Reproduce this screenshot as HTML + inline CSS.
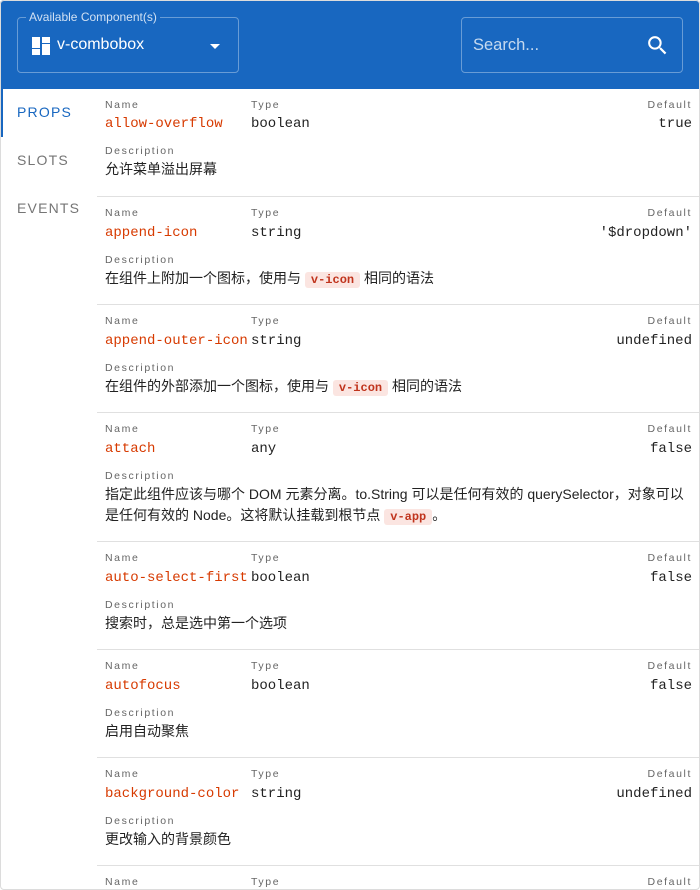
<!DOCTYPE html><html><head><meta charset="utf-8"><style>
*{box-sizing:border-box;margin:0;padding:0}
body{width:700px;height:890px;overflow:hidden;background:#fff;font-family:"Liberation Sans","Noto Sans CJK SC",sans-serif;position:relative}
.card{position:absolute;left:0;top:0;width:700px;height:890px;border-radius:4px;overflow:hidden}
.bord{position:absolute;left:0;top:0;width:700px;height:890px;border:1px solid #dcdcdc;border-radius:4px;pointer-events:none}
.hdr{position:absolute;left:0;top:0;width:700px;height:89px;background:#1867c0}
.sel{position:absolute;left:17px;top:17px;width:222px;height:56px;border:1px solid rgba(255,255,255,.35);border-radius:4px}
.leg{position:absolute;left:26px;top:10px;font-size:12px;color:rgba(255,255,255,.8);background:#1867c0;padding:0 3px;line-height:14px}
.srch{position:absolute;left:461px;top:17px;width:222px;height:56px;border:1px solid rgba(255,255,255,.35);border-radius:4px}
.tab{position:absolute;left:17px;font-size:14px;letter-spacing:1.2px;color:#757575}
.row{position:absolute;left:97px;width:603px;height:108px;border-top:1px solid #e0e0e0}
.lbl{position:absolute;font-size:10.5px;letter-spacing:1.6px;color:#666;line-height:12px}
.val{position:absolute;font-family:"Liberation Mono",monospace;font-size:14px;color:#222;line-height:18px}
.nm{color:#d73a00}
.d{position:absolute;left:8px;right:16px;font-size:14px;color:#222;line-height:21px}
code{font-family:"Liberation Mono",monospace;font-size:12px;font-weight:bold;color:#c0341d;background:#fbe5e1;border-radius:3px;padding:1px 6px}
</style></head><body><div class="card">
<div class="hdr">
<div class="sel"><div style="position:absolute;left:14px;top:19px;width:8px;height:11px;background:#fff"></div><div style="position:absolute;left:14px;top:31px;width:8px;height:6px;background:#fff"></div><div style="position:absolute;left:24px;top:19px;width:8px;height:6px;background:#fff"></div><div style="position:absolute;left:24px;top:26px;width:8px;height:11px;background:#fff"></div>
<div style="position:absolute;left:39px;top:18px;font-size:16px;color:#fff">v-combobox</div>
<div style="position:absolute;left:192px;top:26px;width:0;height:0;border-left:5px solid transparent;border-right:5px solid transparent;border-top:5px solid #fff"></div></div>
<div class="leg" style="left:26px">Available Component(s)</div>
<div class="srch"><div style="position:absolute;left:11px;top:18px;font-size:16.5px;color:rgba(255,255,255,.75)">Search...</div>
<svg style="position:absolute;left:183px;top:15px" width="25" height="25" viewBox="0 0 24 24"><path fill="#fff" d="M15.5 14h-.79l-.28-.27A6.47 6.47 0 0 0 16 9.5 6.5 6.5 0 1 0 9.5 16c1.61 0 3.09-.59 4.23-1.57l.27.28v.79l5 4.99L20.49 19l-4.99-5zm-6 0C7.01 14 5 11.99 5 9.5S7.01 5 9.5 5 14 7.01 14 9.5 11.99 14 9.5 14z"/></svg></div>
</div>
<div style="position:absolute;left:1px;top:89px;width:2px;height:48px;background:#1867c0"></div>
<div class="tab" style="top:104px;color:#1867c0">PROPS</div>
<div class="tab" style="top:152px">SLOTS</div>
<div class="tab" style="top:200px">EVENTS</div>
<div class="row" style="top:88px;border-top:none"><div class="lbl" style="left:8px;top:11px">Name</div><div class="lbl" style="left:154px;top:11px">Type</div><div class="lbl" style="right:8px;top:11px">Default</div><div class="val nm" style="left:8px;top:27px">allow-overflow</div><div class="val" style="left:154px;top:27px">boolean</div><div class="val" style="right:8px;top:27px">true</div><div class="lbl" style="left:8px;top:57px">Description</div><div class="d" style="top:71px">允许菜单溢出屏幕</div></div>
<div class="row" style="top:196px"><div class="lbl" style="left:8px;top:10px">Name</div><div class="lbl" style="left:154px;top:10px">Type</div><div class="lbl" style="right:8px;top:10px">Default</div><div class="val nm" style="left:8px;top:27px">append-icon</div><div class="val" style="left:154px;top:27px">string</div><div class="val" style="right:8px;top:27px">'$dropdown'</div><div class="lbl" style="left:8px;top:57px">Description</div><div class="d" style="top:71px">在组件上附加一个图标，使用与 <code>v-icon</code> 相同的语法</div></div>
<div class="row" style="top:304px"><div class="lbl" style="left:8px;top:10px">Name</div><div class="lbl" style="left:154px;top:10px">Type</div><div class="lbl" style="right:8px;top:10px">Default</div><div class="val nm" style="left:8px;top:27px">append-outer-icon</div><div class="val" style="left:154px;top:27px">string</div><div class="val" style="right:8px;top:27px">undefined</div><div class="lbl" style="left:8px;top:57px">Description</div><div class="d" style="top:71px">在组件的外部添加一个图标，使用与 <code>v-icon</code> 相同的语法</div></div>
<div class="row" style="top:412px;height:129px"><div class="lbl" style="left:8px;top:10px">Name</div><div class="lbl" style="left:154px;top:10px">Type</div><div class="lbl" style="right:8px;top:10px">Default</div><div class="val nm" style="left:8px;top:27px">attach</div><div class="val" style="left:154px;top:27px">any</div><div class="val" style="right:8px;top:27px">false</div><div class="lbl" style="left:8px;top:57px">Description</div><div class="d" style="top:71px">指定此组件应该与哪个 DOM 元素分离。to.String 可以是任何有效的 querySelector，对象可以是任何有效的 Node。这将默认挂载到根节点 <code>v-app</code>。</div></div>
<div class="row" style="top:541px"><div class="lbl" style="left:8px;top:10px">Name</div><div class="lbl" style="left:154px;top:10px">Type</div><div class="lbl" style="right:8px;top:10px">Default</div><div class="val nm" style="left:8px;top:27px">auto-select-first</div><div class="val" style="left:154px;top:27px">boolean</div><div class="val" style="right:8px;top:27px">false</div><div class="lbl" style="left:8px;top:57px">Description</div><div class="d" style="top:71px">搜索时，总是选中第一个选项</div></div>
<div class="row" style="top:649px"><div class="lbl" style="left:8px;top:10px">Name</div><div class="lbl" style="left:154px;top:10px">Type</div><div class="lbl" style="right:8px;top:10px">Default</div><div class="val nm" style="left:8px;top:27px">autofocus</div><div class="val" style="left:154px;top:27px">boolean</div><div class="val" style="right:8px;top:27px">false</div><div class="lbl" style="left:8px;top:57px">Description</div><div class="d" style="top:71px">启用自动聚焦</div></div>
<div class="row" style="top:757px"><div class="lbl" style="left:8px;top:10px">Name</div><div class="lbl" style="left:154px;top:10px">Type</div><div class="lbl" style="right:8px;top:10px">Default</div><div class="val nm" style="left:8px;top:27px">background-color</div><div class="val" style="left:154px;top:27px">string</div><div class="val" style="right:8px;top:27px">undefined</div><div class="lbl" style="left:8px;top:57px">Description</div><div class="d" style="top:71px">更改输入的背景颜色</div></div>
<div class="row" style="top:865px;height:24px"><div class="lbl" style="left:8px;top:10px">Name</div><div class="lbl" style="left:154px;top:10px">Type</div><div class="lbl" style="right:8px;top:10px">Default</div></div>
</div><div class="bord"></div></body></html>
